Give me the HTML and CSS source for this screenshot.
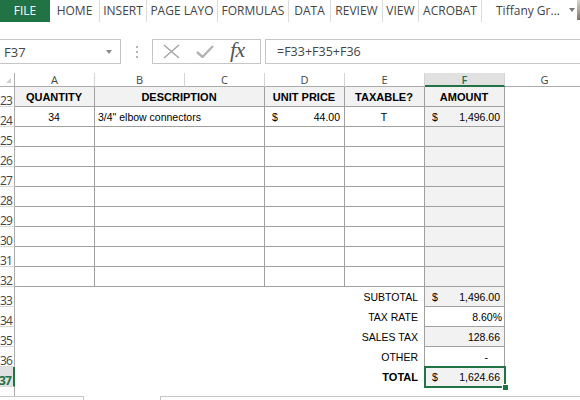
FILE: index.html
```html
<!DOCTYPE html>
<html lang="en">
<head>
  <meta charset="UTF-8" />
  <title>Invoice - Excel</title>
  <link rel="stylesheet" href="styles.css">
</head>
<body>
  <header class="ribbon">
    <div class="tab tab-file">FILE</div>
    <div class="tab">HOME</div>
    <div class="tab">INSERT</div>
    <div class="tab">PAGE LAYO</div>
    <div class="tab">FORMULAS</div>
    <div class="tab">DATA</div>
    <div class="tab">REVIEW</div>
    <div class="tab">VIEW</div>
    <div class="tab">ACROBAT</div>
    <div class="account">Tiffany Gr... <span class="caret"></span></div>
    <div class="avatar"></div>
  </header>

  <section class="formula-bar">
    <div class="name-box"><span>F37</span><span class="caret"></span></div>
    <div class="grip"><span></span></div>
    <div class="fx-box">
      <svg width="17" height="15" viewBox="0 0 17 15"><path d="M1 1 L16 14 M16 1 L1 14" stroke="#a3a3a3" stroke-width="1.4" fill="none"/></svg>
      <svg width="18" height="13" viewBox="0 0 18 13"><path d="M1 7 L6.5 12 L17 1" stroke="#b3b3b3" stroke-width="2.4" fill="none"/></svg>
      <span class="fx">fx</span>
    </div>
    <div class="formula">=F33+F35+F36</div>
  </section>

  <main class="sheet">
    <div class="corner"><span></span></div>
    <div class="ch">A</div>
    <div class="ch">B</div>
    <div class="ch">C</div>
    <div class="ch">D</div>
    <div class="ch">E</div>
    <div class="ch active">F</div>
    <div class="ch">G</div>

    <div class="rh">23</div>
    <div class="cell head">QUANTITY</div>
    <div class="cell head merge">DESCRIPTION</div>
    <div class="cell head">UNIT PRICE</div>
    <div class="cell head">TAXABLE?</div>
    <div class="cell head">AMOUNT</div>

    <div class="rh">24</div>
    <div class="cell center">34</div>
    <div class="cell merge">3/4" elbow connectors</div>
    <div class="cell money"><span>$</span><span>44.00</span></div>
    <div class="cell center">T</div>
    <div class="cell money shade"><span>$</span><span>1,496.00</span></div>

    <div class="rh">25</div>
    <div class="cell"></div><div class="cell merge"></div><div class="cell"></div><div class="cell"></div><div class="cell shade"></div>
    <div class="rh">26</div>
    <div class="cell"></div><div class="cell merge"></div><div class="cell"></div><div class="cell"></div><div class="cell shade"></div>
    <div class="rh">27</div>
    <div class="cell"></div><div class="cell merge"></div><div class="cell"></div><div class="cell"></div><div class="cell shade"></div>
    <div class="rh">28</div>
    <div class="cell"></div><div class="cell merge"></div><div class="cell"></div><div class="cell"></div><div class="cell shade"></div>
    <div class="rh">29</div>
    <div class="cell"></div><div class="cell merge"></div><div class="cell"></div><div class="cell"></div><div class="cell shade"></div>
    <div class="rh">30</div>
    <div class="cell"></div><div class="cell merge"></div><div class="cell"></div><div class="cell"></div><div class="cell shade"></div>
    <div class="rh">31</div>
    <div class="cell"></div><div class="cell merge"></div><div class="cell"></div><div class="cell"></div><div class="cell shade"></div>
    <div class="rh">32</div>
    <div class="cell"></div><div class="cell merge"></div><div class="cell"></div><div class="cell"></div><div class="cell shade"></div>

    <div class="rh">33</div>
    <div class="spacer"></div>
    <div class="label">SUBTOTAL</div>
    <div class="cell money shade"><span>$</span><span>1,496.00</span></div>

    <div class="rh">34</div>
    <div class="spacer"></div>
    <div class="label">TAX RATE</div>
    <div class="cell right pct">8.60%</div>

    <div class="rh">35</div>
    <div class="spacer"></div>
    <div class="label">SALES TAX</div>
    <div class="cell right shade">128.66</div>

    <div class="rh">36</div>
    <div class="spacer"></div>
    <div class="label">OTHER</div>
    <div class="cell right dash">-</div>

    <div class="rh active">37</div>
    <div class="spacer"></div>
    <div class="label total">TOTAL</div>
    <div class="cell money shade selected"><span>$</span><span>1,624.66</span><i class="handle"></i></div>

    <div class="rh">38</div>
  </main>

  <footer class="sheet-bar">
    <div class="tabs-box"></div>
    <div class="scroll-box"></div>
  </footer>
</body>
</html>
```

FILE: styles.css
```css
body {
  margin: 0;
  width: 580px;
  height: 400px;
  overflow: hidden;
  font-family: "Liberation Sans", Arial, sans-serif;
  background: #fff;
  color: #000;
}

/* ribbon tabs */
.ribbon {
  display: grid;
  grid-template-columns: 50px 50px 47px 71px 71px 42px 52px 36px 63px 1fr 10px;
  height: 22px;
  font-family: "Open Sans", sans-serif;
  font-size: 12px;
  color: #444;
}
.tab {
  display: flex;
  align-items: center;
  justify-content: center;
  padding-bottom: 2px;
  border-right: 1px solid #dcdcdc;
  white-space: nowrap;
  overflow: hidden;
}
.tab-file {
  background: #217346;
  color: #fff;
  border-right: none;
}
.account {
  display: flex;
  align-items: center;
  gap: 9px;
  padding: 0 0 2px 14px;
  white-space: nowrap;
}
.caret {
  width: 0;
  height: 0;
  border-left: 3.5px solid transparent;
  border-right: 3.5px solid transparent;
  border-top: 4px solid #777;
}
.avatar {
  margin-left: 2px;
  height: 20px;
  background: linear-gradient(160deg, #ded8cc, #a39886 60%, #6f6656);
}

/* formula bar */
.formula-bar {
  display: flex;
  height: 25px;
  margin-top: 17px;
  font-family: "Open Sans", sans-serif;
  font-size: 13px;
  color: #444;
}
.name-box {
  box-sizing: border-box;
  width: 121px;
  display: flex;
  align-items: center;
  justify-content: space-between;
  padding: 0 8px 0 4px;
  border: 1px solid #c6c6c6;
  border-left: none;
}
.name-box .caret {
  border-top-color: #8a8a8a;
}
.grip {
  width: 31px;
  display: flex;
  align-items: center;
  justify-content: center;
}
.grip span {
  width: 2px;
  height: 12px;
  background: repeating-linear-gradient(#b5b5b5 0 2px, transparent 2px 5px);
}
.fx-box {
  box-sizing: border-box;
  width: 109px;
  display: flex;
  align-items: center;
  gap: 16px;
  padding-left: 10px;
  border: 1px solid #c6c6c6;
}
.fx {
  font-family: "Liberation Serif", serif;
  font-style: italic;
  font-size: 22px;
  line-height: 20px;
  color: #555;
  letter-spacing: -0.5px;
  margin-top: -3px;
}
.formula {
  flex: 1;
  display: flex;
  align-items: center;
  margin-left: 4px;
  padding-left: 11px;
  border: 1px solid #c6c6c6;
  border-right: none;
  font-size: 12.5px;
}

/* worksheet grid */
.sheet {
  height: 323px;
  margin-top: 9px;
  overflow: hidden;
  display: grid;
  grid-template-columns: 15px 80px 90px 80px 80px 80px 80px 80px;
  grid-template-rows: 14px;
  grid-auto-rows: 20px;
  font-size: 10.5px;
}
.sheet > div {
  box-sizing: border-box;
}
.corner {
  display: flex;
  align-items: flex-end;
  justify-content: flex-end;
  padding: 0 3px 3px 0;
  border-right: 1px solid #ababab;
  border-bottom: 1px solid #ababab;
}
.corner span {
  width: 0;
  height: 0;
  border-left: 5px solid transparent;
  border-bottom: 5px solid #d0d0d0;
}
.ch {
  display: flex;
  align-items: center;
  justify-content: center;
  font-family: "Open Sans", sans-serif;
  font-size: 11px;
  color: #444;
  border-right: 1px solid #d4d4d4;
  border-bottom: 1px solid #ababab;
}
.ch.active {
  background: #e1e1e1;
  color: #217346;
  font-weight: 600;
  border-bottom: 2px solid #217346;
}
.rh {
  grid-column: 1;
  display: flex;
  align-items: flex-end;
  justify-content: flex-end;
  padding-right: 2px;
  overflow: hidden;
  white-space: nowrap;
  font-family: "Open Sans", sans-serif;
  font-size: 12px;
  letter-spacing: -0.9px;
  line-height: 10px;
  color: #444;
  border-right: 1px solid #ababab;
  border-bottom: 1px solid #dadada;
}
.rh.active {
  background: #e1e1e1;
  color: #217346;
  font-weight: bold;
  border-right: 2px solid #217346;
}

.cell {
  display: flex;
  align-items: center;
  padding: 0 4px 0 3px;
  white-space: nowrap;
  border-right: 1px solid #a0a0a0;
  border-bottom: 1px solid #a0a0a0;
}
.head {
  justify-content: center;
  background: #f2f2f2;
  font-weight: bold;
  font-size: 11px;
}
.merge {
  grid-column: span 2;
}
.center {
  justify-content: center;
}
.right {
  justify-content: flex-end;
}
.money {
  justify-content: space-between;
  padding-left: 7px;
}
.shade {
  background: #f2f2f2;
}
.pct {
  padding-right: 2px;
}
.dash {
  padding-right: 16px;
}
.spacer {
  grid-column: span 4;
}
.label {
  display: flex;
  align-items: center;
  justify-content: flex-end;
  padding-right: 6px;
  border-right: 1px solid #a0a0a0;
}
.label.total {
  font-weight: bold;
  font-size: 11px;
}
.selected {
  position: relative;
  outline: 2px solid #217346;
  outline-offset: -1px;
}
.handle {
  position: absolute;
  right: -4px;
  bottom: -4px;
  width: 5px;
  height: 5px;
  background: #217346;
  border: 1px solid #fff;
  border-right: none;
  border-bottom: none;
}

/* sheet tabs and scroll bar strip */
.sheet-bar {
  display: flex;
  height: 4px;
}
.tabs-box {
  width: 84px;
  box-sizing: border-box;
  border-top: 1px solid #c6c6c6;
  border-right: 1px solid #c6c6c6;
}
.scroll-box {
  flex: 1;
  margin-left: 76px;
  border-top: 1px solid #c6c6c6;
  border-left: 1px solid #c6c6c6;
}
```
